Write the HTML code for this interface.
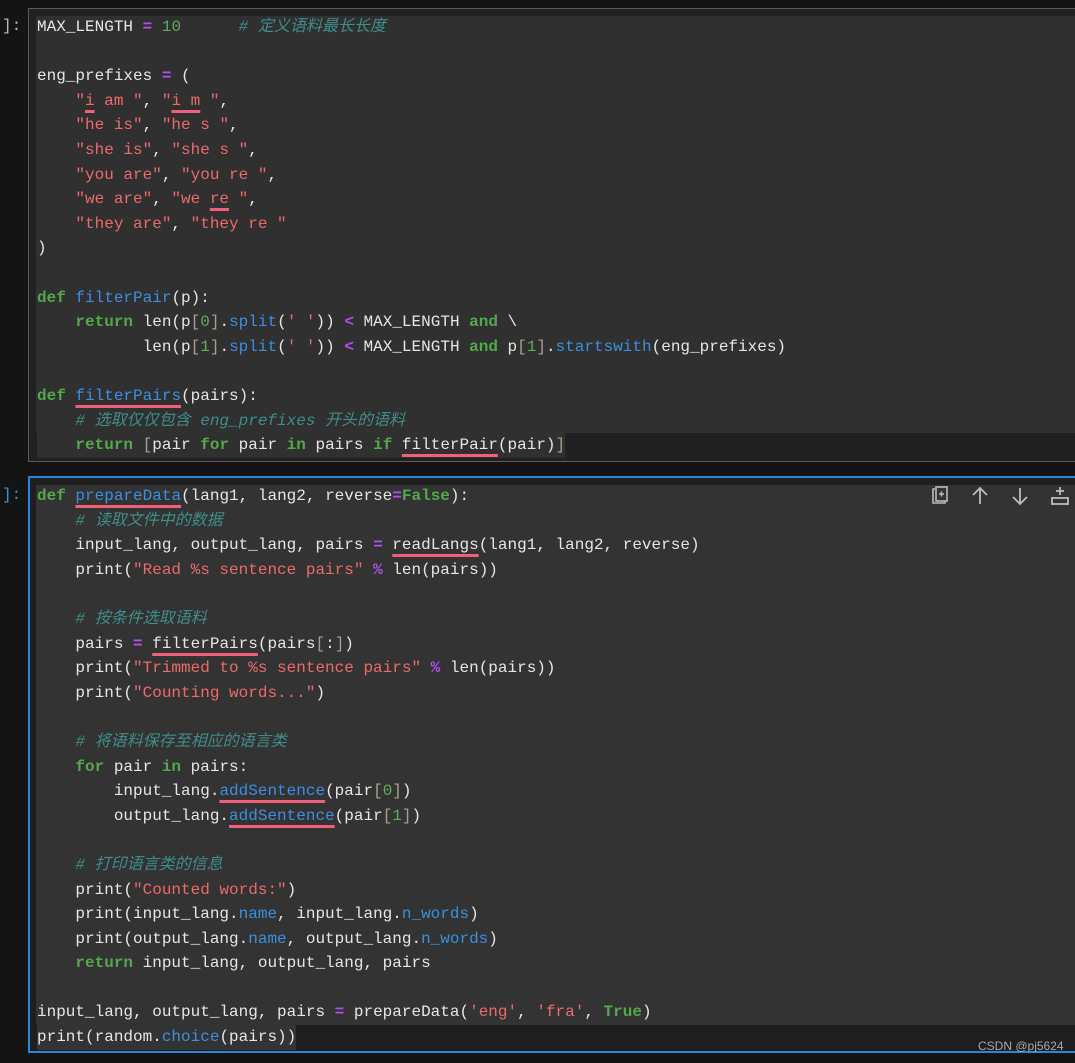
<!DOCTYPE html>
<html><head><meta charset="utf-8"><style>
html,body{margin:0;padding:0;background:#141414;width:1075px;height:1063px;overflow:hidden;position:relative}
.p{position:absolute;left:2px;font:16px "Liberation Mono",monospace;}
.c1b{position:absolute;left:28px;top:8px;width:1060px;height:454px;border:1px solid #5a5a5a;box-sizing:border-box;background:#212121}
.c1i{position:absolute;left:36px;top:16px;width:1050px;height:417px;background:#303030}
.c2b{position:absolute;left:28px;top:476px;width:1060px;height:577px;border:2px solid #2a86d8;box-sizing:border-box;background:#1e1e1e}
.c2i{position:absolute;left:36px;top:485px;width:1050px;height:540px;background:#333}
.code{position:absolute;left:37px;font:16px/24.6px "Liberation Mono","Noto Sans CJK SC",monospace;color:#e6e6e6}
.l{height:24.6px;white-space:pre}
.k{color:#52a84b;font-weight:bold}
.s{color:#ec6a6a}
.f{color:#3b8fe0}
.o{color:#b24ff0;font-weight:bold}
.n{color:#5fae5a}
.b{color:#a8a08a}
.cm{color:#3e8d8a;font-style:italic;font-family:"Liberation Mono","Noto Sans CJK SC",monospace}
.u{text-decoration:underline;text-decoration-color:#f0607a;text-decoration-thickness:3px;text-underline-offset:5px}
.ic{position:absolute;top:484px}
</style></head><body>
<div class="c1b"></div><div class="c1i"></div>
<div class="c2b"></div><div class="c2i"></div>
<div class="p" style="top:17px;color:#bbb">]:</div>
<div class="p" style="top:486px;color:#3b8fe0">]:</div>
<div class="code" style="top:15px">
<div class="l">MAX_LENGTH <span class="o">=</span> <span class="n">10</span>      <span class="cm"># 定义语料最长长度</span></div>
<div class="l"></div>
<div class="l">eng_prefixes <span class="o">=</span> (</div>
<div class="l">    <span class="s">"<span class="u">i</span> am "</span>, <span class="s">"<span class="u">i m</span> "</span>,</div>
<div class="l">    <span class="s">"he is"</span>, <span class="s">"he s "</span>,</div>
<div class="l">    <span class="s">"she is"</span>, <span class="s">"she s "</span>,</div>
<div class="l">    <span class="s">"you are"</span>, <span class="s">"you re "</span>,</div>
<div class="l">    <span class="s">"we are"</span>, <span class="s">"we <span class="u">re</span> "</span>,</div>
<div class="l">    <span class="s">"they are"</span>, <span class="s">"they re "</span></div>
<div class="l">)</div>
<div class="l"></div>
<div class="l"><span class="k">def</span> <span class="f">filterPair</span>(p):</div>
<div class="l">    <span class="k">return</span> len(p<span class="b">[</span><span class="n">0</span><span class="b">]</span>.<span class="f">split</span>(<span class="s">' '</span>)) <span class="o">&lt;</span> MAX_LENGTH <span class="k">and</span> \</div>
<div class="l">           len(p<span class="b">[</span><span class="n">1</span><span class="b">]</span>.<span class="f">split</span>(<span class="s">' '</span>)) <span class="o">&lt;</span> MAX_LENGTH <span class="k">and</span> p<span class="b">[</span><span class="n">1</span><span class="b">]</span>.<span class="f">startswith</span>(eng_prefixes)</div>
<div class="l"></div>
<div class="l"><span class="k">def</span> <span class="f u">filterPairs</span>(pairs):</div>
<div class="l">    <span class="cm"># 选取仅仅包含 eng_prefixes 开头的语料</span></div>
<div class="l" style="background:#303030;width:max-content">    <span class="k">return</span> <span class="b">[</span>pair <span class="k">for</span> pair <span class="k">in</span> pairs <span class="k">if</span> <span class="u">filterPair</span>(pair)<span class="b">]</span></div>
</div>
<div class="code" style="top:484px">
<div class="l"><span class="k">def</span> <span class="f u">prepareData</span>(lang1, lang2, reverse<span class="o">=</span><span class="k">False</span>):</div>
<div class="l">    <span class="cm"># 读取文件中的数据</span></div>
<div class="l">    input_lang, output_lang, pairs <span class="o">=</span> <span class="u">readLangs</span>(lang1, lang2, reverse)</div>
<div class="l">    print(<span class="s">"Read %s sentence pairs"</span> <span class="o">%</span> len(pairs))</div>
<div class="l"></div>
<div class="l">    <span class="cm"># 按条件选取语料</span></div>
<div class="l">    pairs <span class="o">=</span> <span class="u">filterPairs</span>(pairs<span class="b">[</span>:<span class="b">]</span>)</div>
<div class="l">    print(<span class="s">"Trimmed to %s sentence pairs"</span> <span class="o">%</span> len(pairs))</div>
<div class="l">    print(<span class="s">"Counting words..."</span>)</div>
<div class="l"></div>
<div class="l">    <span class="cm"># 将语料保存至相应的语言类</span></div>
<div class="l">    <span class="k">for</span> pair <span class="k">in</span> pairs:</div>
<div class="l">        input_lang.<span class="f u">addSentence</span>(pair<span class="b">[</span><span class="n">0</span><span class="b">]</span>)</div>
<div class="l">        output_lang.<span class="f u">addSentence</span>(pair<span class="b">[</span><span class="n">1</span><span class="b">]</span>)</div>
<div class="l"></div>
<div class="l">    <span class="cm"># 打印语言类的信息</span></div>
<div class="l">    print(<span class="s">"Counted words:"</span>)</div>
<div class="l">    print(input_lang.<span class="f">name</span>, input_lang.<span class="f">n_words</span>)</div>
<div class="l">    print(output_lang.<span class="f">name</span>, output_lang.<span class="f">n_words</span>)</div>
<div class="l">    <span class="k">return</span> input_lang, output_lang, pairs</div>
<div class="l"></div>
<div class="l">input_lang, output_lang, pairs <span class="o">=</span> prepareData(<span class="s">'eng'</span>, <span class="s">'fra'</span>, <span class="k">True</span>)</div>
<div class="l" style="background:#333;width:max-content">print(random.<span class="f">choice</span>(pairs))</div>
</div>
<svg class="ic" style="left:928px" width="24" height="24" viewBox="0 0 24 24" fill="none" stroke="#bbb" stroke-width="1.6"><path d="M7 5H5v14h12v-2"/><rect x="8" y="3" width="11" height="14"/><path d="M13.5 7.5v5M11 10h5"/></svg>
<svg class="ic" style="left:968px" width="24" height="24" viewBox="0 0 24 24" fill="none" stroke="#bbb" stroke-width="1.8"><path d="M12 20V4M5 11l7-7 7 7"/></svg>
<svg class="ic" style="left:1008px" width="24" height="24" viewBox="0 0 24 24" fill="none" stroke="#bbb" stroke-width="1.8"><path d="M12 4v16M5 13l7 7 7-7"/></svg>
<svg class="ic" style="left:1048px" width="24" height="24" viewBox="0 0 24 24" fill="none" stroke="#bbb" stroke-width="1.8"><path d="M12 3v8M8 7h8"/><rect x="4" y="14" width="16" height="6"/></svg>
<div style="position:absolute;left:978px;top:1039px;font:12px 'Liberation Sans',sans-serif;color:#aaa">CSDN @pj5624</div>
</body></html>
